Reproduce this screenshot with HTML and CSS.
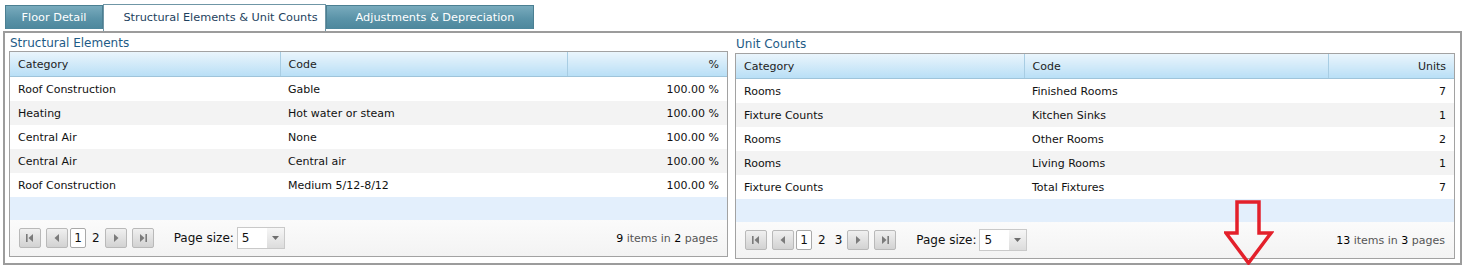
FILE: index.html
```html
<!DOCTYPE html>
<html lang="en">
<head>
    <meta charset="UTF-8">
    <title>Structural Elements &amp; Unit Counts</title>
    <link rel="stylesheet" href="styles.css">
</head>
<body>
    <div class="page">
        <ul class="tabs">
            <li class="tab tab-floor">Floor Detail</li>
            <li class="tab tab-struct selected">Structural Elements &amp; Unit Counts</li>
            <li class="tab tab-adj">Adjustments &amp; Depreciation</li>
        </ul>
        <div class="tab-body">
            <section class="panel panel-left">
                <h2 class="panel-title">Structural Elements</h2>
                <div class="grid">
                    <table>
                        <colgroup>
                            <col class="c-se1"><col class="c-se2"><col class="c-se3">
                        </colgroup>
                        <thead>
                            <tr><th>Category</th><th>Code</th><th class="num">%</th></tr>
                        </thead>
                        <tbody>
                            <tr><td>Roof Construction</td><td>Gable</td><td class="num">100.00 %</td></tr>
                            <tr class="alt"><td>Heating</td><td>Hot water or steam</td><td class="num">100.00 %</td></tr>
                            <tr><td>Central Air</td><td>None</td><td class="num">100.00 %</td></tr>
                            <tr class="alt"><td>Central Air</td><td>Central air</td><td class="num">100.00 %</td></tr>
                            <tr><td>Roof Construction</td><td>Medium 5/12-8/12</td><td class="num">100.00 %</td></tr>
                        </tbody>
                    </table>
                    <div class="band"></div>
                    <div class="pager">
                        <span class="pbtn"><svg width="10" height="10" viewBox="0 0 10 10"><rect x="1" y="1" width="1.6" height="8" fill="#7b7b7b"/><path d="M8 1 L8 9 L3.5 5 Z" fill="#7b7b7b"/></svg></span>
                        <span class="pbtn"><svg width="10" height="10" viewBox="0 0 10 10"><path d="M7 1 L7 9 L2.5 5 Z" fill="#7b7b7b"/></svg></span>
                        <span class="pages"><span class="cur">1</span><span class="pnum">2</span></span>
                        <span class="pbtn"><svg width="10" height="10" viewBox="0 0 10 10"><path d="M3 1 L3 9 L7.5 5 Z" fill="#7b7b7b"/></svg></span>
                        <span class="pbtn"><svg width="10" height="10" viewBox="0 0 10 10"><path d="M2 1 L2 9 L6.5 5 Z" fill="#7b7b7b"/><rect x="7.4" y="1" width="1.6" height="8" fill="#7b7b7b"/></svg></span>
                        <span class="psize">Page size:</span>
                        <span class="combo"><span class="combo-val">5</span><span class="combo-arrow"><svg width="7" height="4" viewBox="0 0 7 4"><path d="M0 0 L7 0 L3.5 4 Z" fill="#6e6e6e"/></svg></span></span>
                        <span class="pinfo"><b>9</b> items in <b>2</b> pages</span>
                    </div>
                </div>
            </section>
            <section class="panel panel-right">
                <h2 class="panel-title">Unit Counts</h2>
                <div class="grid">
                    <table>
                        <colgroup>
                            <col class="c-uc1"><col class="c-uc2"><col class="c-uc3">
                        </colgroup>
                        <thead>
                            <tr><th>Category</th><th>Code</th><th class="num">Units</th></tr>
                        </thead>
                        <tbody>
                            <tr><td>Rooms</td><td>Finished Rooms</td><td class="num">7</td></tr>
                            <tr class="alt"><td>Fixture Counts</td><td>Kitchen Sinks</td><td class="num">1</td></tr>
                            <tr><td>Rooms</td><td>Other Rooms</td><td class="num">2</td></tr>
                            <tr class="alt"><td>Rooms</td><td>Living Rooms</td><td class="num">1</td></tr>
                            <tr><td>Fixture Counts</td><td>Total Fixtures</td><td class="num">7</td></tr>
                        </tbody>
                    </table>
                    <div class="band"></div>
                    <div class="pager">
                        <span class="pbtn"><svg width="10" height="10" viewBox="0 0 10 10"><rect x="1" y="1" width="1.6" height="8" fill="#7b7b7b"/><path d="M8 1 L8 9 L3.5 5 Z" fill="#7b7b7b"/></svg></span>
                        <span class="pbtn"><svg width="10" height="10" viewBox="0 0 10 10"><path d="M7 1 L7 9 L2.5 5 Z" fill="#7b7b7b"/></svg></span>
                        <span class="pages"><span class="cur">1</span><span class="pnum">2</span><span class="pnum">3</span></span>
                        <span class="pbtn"><svg width="10" height="10" viewBox="0 0 10 10"><path d="M3 1 L3 9 L7.5 5 Z" fill="#7b7b7b"/></svg></span>
                        <span class="pbtn"><svg width="10" height="10" viewBox="0 0 10 10"><path d="M2 1 L2 9 L6.5 5 Z" fill="#7b7b7b"/><rect x="7.4" y="1" width="1.6" height="8" fill="#7b7b7b"/></svg></span>
                        <span class="psize">Page size:</span>
                        <span class="combo"><span class="combo-val">5</span><span class="combo-arrow"><svg width="7" height="4" viewBox="0 0 7 4"><path d="M0 0 L7 0 L3.5 4 Z" fill="#6e6e6e"/></svg></span></span>
                        <span class="pinfo"><b>13</b> items in <b>3</b> pages</span>
                    </div>
                </div>
                <svg class="callout" width="50" height="66" viewBox="0 0 50 66">
                    <path d="M13 2 L35 2 L35 33 L47 33 L24.5 63 L2 33 L13 33 Z" fill="none" stroke="#e3202b" stroke-width="3.5" stroke-linejoin="miter"/>
                </svg>
            </section>
        </div>
    </div>
</body>
</html>
```

FILE: styles.css
```css
body {
    margin: 0;
    padding: 0;
    background: #fff;
    font-family: Verdana, "DejaVu Sans", sans-serif;
    font-size: 11px;
    color: #111;
}
.page {
    padding: 4px 0 0 3px;
    width: 1459px;
}
.tabs {
    list-style: none;
    margin: 0 0 0 2px;
    padding: 0;
    display: flex;
    position: relative;
    z-index: 1;
}
.tab {
    box-sizing: border-box;
    height: 24px;
    line-height: 23px;
    margin-top: 1px;
    text-align: center;
    color: #fff;
    background: linear-gradient(#79abbd, #5a93a8 55%, #4d879c);
    border: 1px solid #4b7f92;
    border-bottom: none;
    font-size: 11.3px;
    white-space: nowrap;
}
.tab-floor { width: 98px; }
.tab-struct { width: 223px; padding-left: 12px; }
.tab-adj { width: 208px; padding-left: 10px; }
.tab.selected {
    margin-top: 0;
    height: 27px;
    line-height: 25px;
    background: #fff;
    color: #1d3f5e;
    border-color: #6f96a6;
}
.tab-body {
    border: 2px solid #9c9c9c;
    display: flex;
    gap: 7px;
    padding: 3px 5px 4px 4px;
    align-items: flex-start;
}
.panel {
    position: relative;
}
.panel-left {
    width: 720px;
}
.panel-right {
    width: 721px;
    margin-top: 1px;
}
.panel-right .panel-title {
    margin-bottom: 1px;
}
.panel-title {
    margin: 0;
    font-weight: normal;
    font-size: 12px;
    line-height: 15px;
    color: #1e5b86;
    padding-left: 1px;
}
.grid {
    border: 1px solid #a2a2a2;
    background: #fff;
}
table {
    width: 100%;
    border-collapse: collapse;
    table-layout: fixed;
}
.c-se1 { width: 270px; }
.c-se2 { width: 287px; }
.c-uc1 { width: 288px; }
.c-uc2 { width: 304px; }
th {
    height: 24px;
    padding: 0 8px;
    text-align: left;
    font-weight: normal;
    color: #222;
    background: linear-gradient(#eaf5fc, #d4ebf9 45%, #b9dff6);
    border-left: 1px solid #a8cde3;
    border-bottom: 1px solid #9fc4da;
}
th:first-child {
    border-left: none;
}
td {
    height: 24px;
    padding: 0 8px;
    white-space: nowrap;
    overflow: hidden;
}
.num {
    text-align: right;
}
tr.alt td {
    background: #f3f3f3;
}
.band {
    height: 23px;
    background: #e3effc;
}
.pager {
    height: 36px;
    background: linear-gradient(#fbfbfb, #f3f3f3);
    display: flex;
    align-items: center;
    padding: 0 9px 0 9px;
}
.pbtn {
    width: 20px;
    height: 18px;
    border: 1px solid #b9b9b9;
    border-radius: 2px;
    background: linear-gradient(#f0f0f0, #d2d2d2);
    display: flex;
    align-items: center;
    justify-content: center;
    margin-right: 5px;
}
.pages {
    display: flex;
    align-items: center;
    margin: 0 5px 0 -3px;
    font-size: 12px;
}
.cur {
    width: 14px;
    height: 18px;
    line-height: 18px;
    text-align: center;
    background: #fff;
    border: 1px solid #a9a9a9;
    border-radius: 2px;
}
.pnum {
    margin-left: 6px;
}
.pnum + .pnum {
    margin-left: 9px;
}
.psize {
    margin-left: 15px;
    font-size: 12px;
}
.combo {
    margin-left: 3px;
    width: 46px;
    height: 20px;
    border: 1px solid #c9c9c9;
    background: #fff;
    display: flex;
    align-items: center;
}
.combo-val {
    flex: 1;
    padding-left: 4px;
    font-size: 12px;
}
.combo-arrow {
    width: 17px;
    height: 20px;
    background: linear-gradient(#f6f6f6, #dcdcdc);
    display: flex;
    align-items: center;
    justify-content: center;
}
.pinfo {
    margin-left: auto;
    color: #555;
}
.pinfo b {
    font-weight: normal;
    color: #000;
}
.callout {
    position: absolute;
    left: 489px;
    top: 163px;
}
```
